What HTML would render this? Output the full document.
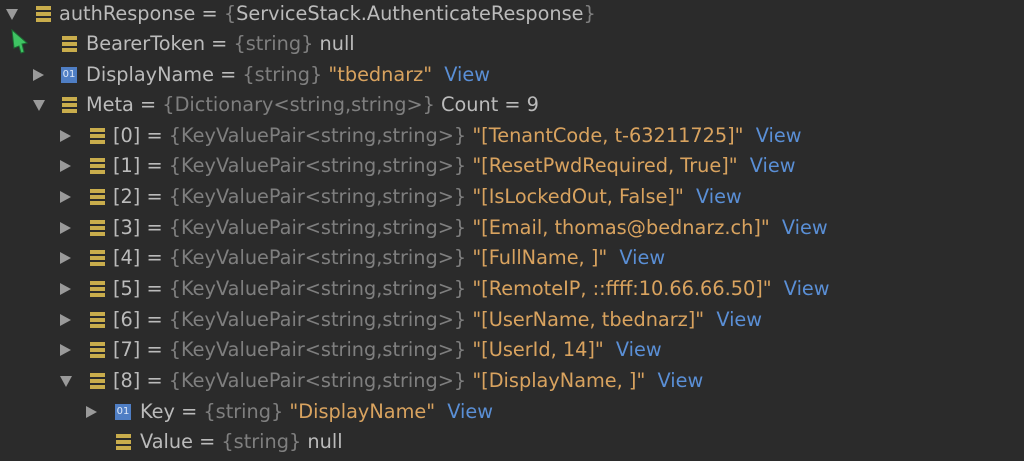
<!DOCTYPE html><html><head><style>
body{margin:0;width:1024px;height:461px;background:#2b2b2b;overflow:hidden;font-family:"DejaVu Sans","Liberation Sans",sans-serif;font-size:19.3px;color:#bbbbbb}
.r{position:absolute;height:30px;line-height:30px;white-space:nowrap}
.t{color:#7f7f7f}.s{color:#d9a35f}.v{color:#5a8fd6;margin-left:6px}
.ar{position:absolute;top:9px;width:0;height:0}
.dn{border-left:6px solid transparent;border-right:6px solid transparent;border-top:11px solid #9a9a9a;top:10px}
.rt{border-top:6px solid transparent;border-bottom:6px solid transparent;border-left:11px solid #9a9a9a}
.ic{position:absolute;top:7px;width:15px;height:16px;background:linear-gradient(#c9ad4c 0 4px,#2b2b2b 4px 6px,#c9ad4c 6px 10px,#2b2b2b 10px 12px,#c9ad4c 12px 16px)}
.b{position:absolute;top:7px;width:16px;height:16px;background:#4f7ec4;color:#dfe8f7;font-size:10px;line-height:16px;text-align:center}
</style></head><body>
<div class="r" style="top:-1px;left:0"><span class="ar dn" style="left:6px"></span><span class="ic" style="left:36px"></span><span style="position:absolute;left:59px">authResponse = <span class="t">{</span>ServiceStack.AuthenticateResponse<span class="t">}</span></span></div>
<svg style="position:absolute;left:11px;top:29px" width="18" height="26"><path d="M1 1 L16 14 L11 15 L13 23 L10 24 L8 17 L3 19 Z" fill="#3fc463" stroke="#1d6b33" stroke-width="1"/></svg>
<div class="r" style="top:29px;left:0"><span class="ic" style="left:62px"></span><span style="position:absolute;left:86px">BearerToken = <span class="t">{string}</span> null</span></div>
<div class="r" style="top:60px;left:0"><span class="ar rt" style="left:33px"></span><span class="b" style="left:61px">01</span><span style="position:absolute;left:86px">DisplayName = <span class="t">{string}</span> <span class="s">"tbednarz"</span> <span class="v">View</span></span></div>
<div class="r" style="top:90px;left:0"><span class="ar dn" style="left:33px"></span><span class="ic" style="left:62px"></span><span style="position:absolute;left:86px">Meta = <span class="t">{Dictionary&lt;string,string&gt;}</span> Count = 9</span></div>
<div class="r" style="top:121px;left:0"><span class="ar rt" style="left:60px"></span><span class="ic" style="left:90px"></span><span style="position:absolute;left:113px">[0] = <span class="t">{KeyValuePair&lt;string,string&gt;}</span> <span class="s">"[TenantCode, t-63211725]"</span> <span class="v">View</span></span></div>
<div class="r" style="top:151px;left:0"><span class="ar rt" style="left:60px"></span><span class="ic" style="left:90px"></span><span style="position:absolute;left:113px">[1] = <span class="t">{KeyValuePair&lt;string,string&gt;}</span> <span class="s">"[ResetPwdRequired, True]"</span> <span class="v">View</span></span></div>
<div class="r" style="top:182px;left:0"><span class="ar rt" style="left:60px"></span><span class="ic" style="left:90px"></span><span style="position:absolute;left:113px">[2] = <span class="t">{KeyValuePair&lt;string,string&gt;}</span> <span class="s">"[IsLockedOut, False]"</span> <span class="v">View</span></span></div>
<div class="r" style="top:213px;left:0"><span class="ar rt" style="left:60px"></span><span class="ic" style="left:90px"></span><span style="position:absolute;left:113px">[3] = <span class="t">{KeyValuePair&lt;string,string&gt;}</span> <span class="s">"[Email, thomas@bednarz.ch]"</span> <span class="v">View</span></span></div>
<div class="r" style="top:243px;left:0"><span class="ar rt" style="left:60px"></span><span class="ic" style="left:90px"></span><span style="position:absolute;left:113px">[4] = <span class="t">{KeyValuePair&lt;string,string&gt;}</span> <span class="s">"[FullName, ]"</span> <span class="v">View</span></span></div>
<div class="r" style="top:274px;left:0"><span class="ar rt" style="left:60px"></span><span class="ic" style="left:90px"></span><span style="position:absolute;left:113px">[5] = <span class="t">{KeyValuePair&lt;string,string&gt;}</span> <span class="s">"[RemoteIP, ::ffff:10.66.66.50]"</span> <span class="v">View</span></span></div>
<div class="r" style="top:305px;left:0"><span class="ar rt" style="left:60px"></span><span class="ic" style="left:90px"></span><span style="position:absolute;left:113px">[6] = <span class="t">{KeyValuePair&lt;string,string&gt;}</span> <span class="s">"[UserName, tbednarz]"</span> <span class="v">View</span></span></div>
<div class="r" style="top:335px;left:0"><span class="ar rt" style="left:60px"></span><span class="ic" style="left:90px"></span><span style="position:absolute;left:113px">[7] = <span class="t">{KeyValuePair&lt;string,string&gt;}</span> <span class="s">"[UserId, 14]"</span> <span class="v">View</span></span></div>
<div class="r" style="top:366px;left:0"><span class="ar dn" style="left:60px"></span><span class="ic" style="left:90px"></span><span style="position:absolute;left:113px">[8] = <span class="t">{KeyValuePair&lt;string,string&gt;}</span> <span class="s">"[DisplayName, ]"</span> <span class="v">View</span></span></div>
<div class="r" style="top:397px;left:0"><span class="ar rt" style="left:86px"></span><span class="b" style="left:115px">01</span><span style="position:absolute;left:140px">Key = <span class="t">{string}</span> <span class="s">"DisplayName"</span> <span class="v">View</span></span></div>
<div class="r" style="top:427px;left:0"><span class="ic" style="left:116px"></span><span style="position:absolute;left:140px">Value = <span class="t">{string}</span> null</span></div>
</body></html>
